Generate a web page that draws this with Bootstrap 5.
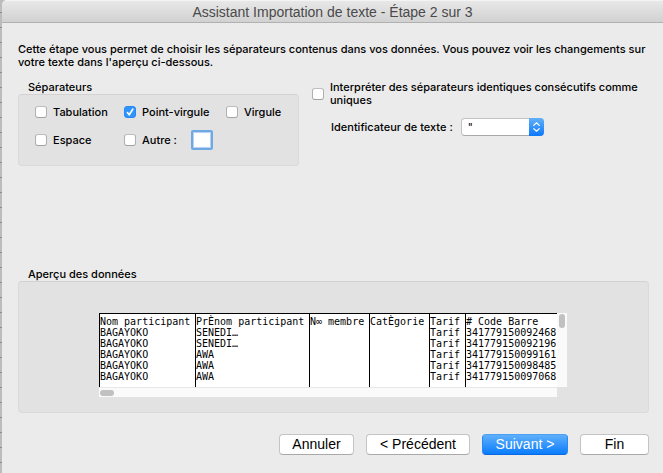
<!DOCTYPE html>
<html lang="fr">
<head>
<meta charset="utf-8">
<meta name="viewport" content="width=device-width, initial-scale=1">
<title>Assistant Importation de texte - Étape 2 sur 3</title>
<link href="https://cdn.jsdelivr.net/npm/bootstrap@5.3.0/dist/css/bootstrap.min.css" rel="stylesheet">
<style>
  body {
    font-family: Inter, "Liberation Sans", sans-serif;
    font-size: 11px; line-height: 13px; font-weight: 500; color: #000;
    background: repeating-linear-gradient(#bcbcbc 0 12px, #8c8c8c 12px 13px, #bcbcbc 13px 15px);
  }
  .sheet { margin-left: 2px; background: #ebebeb; border-top-left-radius: 5px; overflow: hidden; }
  .titlebar {
    height: 23px; padding-top: 2px; border-top: 1px solid #f4f4f4; border-bottom: 1px solid #b1b1b1;
    background: linear-gradient(#e8e8e8, #d1d1d1);
    font-family: "Liberation Sans", sans-serif; font-size: 14px; line-height: 19px; color: #4a4a4a;
  }
  .sheet-body { padding: 20px 14px 16px 16px; }
  .intro { margin-right: -12px; }
  .groupbox { background: #e2e2e2; border: 1px solid #dadada; border-top-color: #d2d2d2; border-radius: 4px; }
  .group-title { padding-left: 10px; font-size: 11px; line-height: 13px; margin: 0; font-weight: 500; }
  .separators { width: 281px; }
  .separators .groupbox { height: 72px; padding: 7px 16px; }
  .sep-grid { display: grid; grid-template-columns: 89px 102px auto; grid-auto-rows: 20px; row-gap: 8px; align-items: center; }
  .tick + label { margin-left: 6px; }
  .form-check-input.tick {
    width: 12px; height: 12px; margin: 0; flex: none; border: 1px solid #b0b0b0; border-top-color: #bdbdbd;
    border-bottom-color: #a0a0a0; border-radius: 3px; background-color: #fff; background-size: 12px 12px;
  }
  .form-check-input.tick:checked {
    border-color: #2a86f0; background-color: #2f95fb;
    background-image: url("data:image/svg+xml,%3csvg xmlns='http://www.w3.org/2000/svg' viewBox='0 0 12 12'%3e%3cpath fill='none' stroke='%23fff' stroke-width='1.6' stroke-linecap='round' stroke-linejoin='round' d='M3.4 6.6 5.2 8.8 8.8 3.2'/%3e%3c/svg%3e");
  }
  .form-control.other {
    width: 22px; height: 20px; min-height: 0; margin-left: 14px; padding: 0 3px; font-size: 11px;
    border: 2px solid #6fa9e3; border-radius: 2px; box-shadow: inset 0 0 0 1px #b5d3f1;
  }
  .options { padding-left: 13px; }
  .ident { margin-top: 11px; padding-left: 19px; }
  .picker { width: 83px; }
  .picker .form-select {
    height: 18px; padding: 0 20px 0 6px; font-size: 11px; line-height: 16px; color: #000;
    border: 1px solid #c2c2c2; border-bottom-color: #a8a8a8; border-radius: 4px; background: #fff;
  }
  .picker svg { position: absolute; top: 0; right: 0; pointer-events: none; }
  .preview-group { margin-top: 102px; }
  .preview-group .groupbox { height: 132px; padding: 31px 1px 0 0; }
  .grid-view { width: 458px; height: 74px; background: #fff; }
  .data { font-family: "DejaVu Sans Mono", monospace; font-size: 10px; line-height: 11px; width: 458px; height: 74px; table-layout: fixed; border-collapse: separate; border-spacing: 0; border-top: 1px solid #000; border-right: 1px solid #000; }
  .data th, .data td { padding: 0; border-left: 1px solid #000; font-weight: 400; text-align: left; white-space: nowrap; height: 11px; }
  .data th { height: 13px; padding-top: 2px; }
  .data .rest td { height: auto; }
  .c96 { width: 96px; } .c114 { width: 114px; } .c60 { width: 60px; } .c36 { width: 36px; } .c92 { width: 92px; }
  .vbar { width: 10px; height: 74px; padding: 1px 2px; background: #fafafa; }
  .vbar .thumb { width: 6px; height: 14px; }
  .hbar { width: 458px; height: 10px; padding: 2px 1px; background: #fafafa; border-top: 1px solid #e8e8e8; }
  .hbar .thumb { width: 14px; height: 6px; }
  .thumb { background: #c1c1c1; border-radius: 3px; }
  .actions { margin-top: 21px; gap: 12px; }
  .btn.push {
    height: 21px; padding: 0; font-family: "Liberation Sans", sans-serif; font-size: 14px; line-height: 19px; color: #000;
    background: #fff; border: 1px solid #c4c4c4; border-bottom-color: #a9a9a9; border-radius: 4px;
  }
  .btn.push.main { color: #fff; background: linear-gradient(#5fb0fa, #0a7cfd); border-color: #4aa0f5 #2a8af5 #0a68e0; }
  .w-cancel { width: 75px; } .w-prev { width: 104px; } .w-next { width: 86px; } .w-end { width: 69px; }
</style>
<script src="https://cdn.jsdelivr.net/npm/bootstrap@5.3.0/dist/js/bootstrap.bundle.min.js"></script>
</head>
<body>
<main class="sheet min-vh-100">
  <h1 class="titlebar text-center fw-normal mb-0">Assistant Importation de texte - Étape 2 sur 3</h1>
  <form class="sheet-body">
    <p class="intro mb-0">Cette étape vous permet de choisir les séparateurs contenus dans vos données. Vous pouvez voir les changements sur votre texte dans l'aperçu ci-dessous.</p>

    <div class="d-flex pt-2 mt-1">
      <section class="separators flex-shrink-0">
        <h2 class="group-title">Séparateurs</h2>
        <div class="groupbox">
          <div class="sep-grid">
            <div class="d-flex align-items-center"><input class="form-check-input tick" type="checkbox" id="tab"><label class="text-nowrap" for="tab">Tabulation</label></div>
            <div class="d-flex align-items-center"><input class="form-check-input tick" type="checkbox" id="semi" checked><label class="text-nowrap" for="semi">Point-virgule</label></div>
            <div class="d-flex align-items-center"><input class="form-check-input tick" type="checkbox" id="comma"><label class="text-nowrap" for="comma">Virgule</label></div>
            <div class="d-flex align-items-center"><input class="form-check-input tick" type="checkbox" id="space"><label class="text-nowrap" for="space">Espace</label></div>
            <div class="d-flex align-items-center"><input class="form-check-input tick" type="checkbox" id="other"><label class="text-nowrap" for="other">Autre :</label><input class="form-control other flex-shrink-0" type="text" maxlength="1" aria-label="Autre séparateur"></div>
          </div>
        </div>
      </section>
      <section class="options flex-grow-1">
        <div class="d-flex align-items-center">
          <input class="form-check-input tick" type="checkbox" id="merge">
          <label for="merge">Interpréter des séparateurs identiques consécutifs comme uniques</label>
        </div>
        <div class="ident d-flex align-items-center">
          <label class="pe-2 text-nowrap" for="quote">Identificateur de texte :</label>
          <div class="picker position-relative">
            <select class="form-select" id="quote"><option>"</option><option>'</option></select>
            <svg width="15" height="18" viewBox="0 0 15 18" aria-hidden="true">
              <defs><linearGradient id="cap" x1="0" y1="0" x2="0" y2="1"><stop offset="0" stop-color="#62b0f8"/><stop offset="1" stop-color="#0b78fb"/></linearGradient></defs>
              <path d="M0 0H11a4 4 0 0 1 4 4V14a4 4 0 0 1-4 4H0Z" fill="url(#cap)"/>
              <path d="M4.7 7.4 7.5 4.8l2.8 2.6M4.7 10.6l2.8 2.6 2.8-2.6" fill="none" stroke="#fff" stroke-width="1.2" stroke-linecap="round" stroke-linejoin="round"/>
            </svg>
          </div>
        </div>
      </section>
    </div>

    <section class="preview-group">
      <h2 class="group-title">Aperçu des données</h2>
      <div class="groupbox d-flex justify-content-center align-items-start">
        <div>
          <div class="grid-view">
            <table class="data">
              <colgroup><col class="c96"><col class="c114"><col class="c60"><col class="c60"><col class="c36"><col class="c92"></colgroup>
              <thead><tr><th>Nom participant</th><th>PrÈnom participant</th><th>N∞ membre</th><th>CatÈgorie</th><th>Tarif</th><th># Code Barre</th></tr></thead>
              <tbody>
                <tr><td>BAGAYOKO</td><td>SENEDI…</td><td></td><td></td><td>Tarif</td><td>341779150092468</td></tr>
                <tr><td>BAGAYOKO</td><td>SENEDI…</td><td></td><td></td><td>Tarif</td><td>341779150092196</td></tr>
                <tr><td>BAGAYOKO</td><td>AWA</td><td></td><td></td><td>Tarif</td><td>341779150099161</td></tr>
                <tr><td>BAGAYOKO</td><td>AWA</td><td></td><td></td><td>Tarif</td><td>341779150098485</td></tr>
                <tr><td>BAGAYOKO</td><td>AWA</td><td></td><td></td><td>Tarif</td><td>341779150097068</td></tr>
                <tr class="rest"><td></td><td></td><td></td><td></td><td></td><td></td></tr>
              </tbody>
            </table>
          </div>
          <div class="hbar"><div class="thumb"></div></div>
        </div>
        <div class="vbar"><div class="thumb"></div></div>
      </div>
    </section>

    <div class="actions d-flex justify-content-end">
      <button type="button" class="btn push w-cancel">Annuler</button>
      <button type="button" class="btn push w-prev">&lt; Précédent</button>
      <button type="submit" class="btn push main w-next">Suivant &gt;</button>
      <button type="button" class="btn push w-end">Fin</button>
    </div>
  </form>
</main>
</body>
</html>
